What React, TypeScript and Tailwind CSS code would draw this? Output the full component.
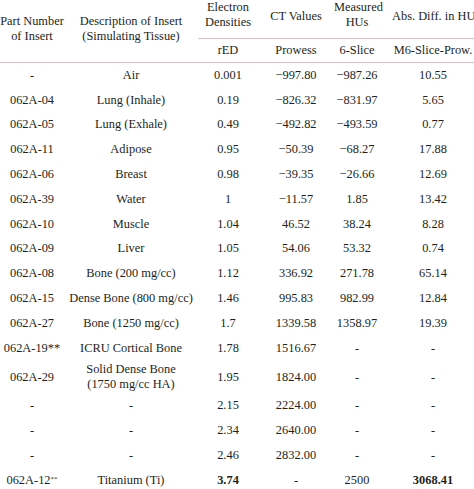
const rows: [React.ReactNode, React.ReactNode, string, string, string, string, boolean?][] = [
  ["-", "Air", "0.001", "\u2212997.80", "\u2212987.26", "10.55"],
  ["062A-04", "Lung (Inhale)", "0.19", "\u2212826.32", "\u2212831.97", "5.65"],
  ["062A-05", "Lung (Exhale)", "0.49", "\u2212492.82", "\u2212493.59", "0.77"],
  ["062A-11", "Adipose", "0.95", "\u221250.39", "\u221268.27", "17.88"],
  ["062A-06", "Breast", "0.98", "\u221239.35", "\u221226.66", "12.69"],
  ["062A-39", "Water", "1", "\u221211.57", "1.85", "13.42"],
  ["062A-10", "Muscle", "1.04", "46.52", "38.24", "8.28"],
  ["062A-09", "Liver", "1.05", "54.06", "53.32", "0.74"],
  ["062A-08", "Bone (200 mg/cc)", "1.12", "336.92", "271.78", "65.14"],
  ["062A-15", "Dense Bone (800 mg/cc)", "1.46", "995.83", "982.99", "12.84"],
  ["062A-27", "Bone (1250 mg/cc)", "1.7", "1339.58", "1358.97", "19.39"],
  ["062A-19**", "ICRU Cortical Bone", "1.78", "1516.67", "-", "-"],
  ["062A-29", <>Solid Dense Bone<br />(1750 mg/cc HA)</>, "1.95", "1824.00", "-", "-"],
  ["-", "-", "2.15", "2224.00", "-", "-"],
  ["-", "-", "2.34", "2640.00", "-", "-"],
  ["-", "-", "2.46", "2832.00", "-", "-"],
  [
    <>062A-12<sup className="text-[7px] align-top relative top-[-1px]">**</sup></>,
    "Titanium (Ti)",
    "3.74",
    "-",
    "2500",
    "3068.41",
    true,
  ],
];

const rule = "border-[#d2c2c2]";

export default function App() {
  return (
    <div className="w-[474px] h-[489px] overflow-hidden bg-white text-[#231f20] text-[12.4px] leading-[15px] font-['Liberation_Serif',serif]">
      <div className="grid grid-cols-[64px_134px_60px_76px_46px_94px] text-center whitespace-nowrap">
        <div className={`row-span-2 border-b ${rule} pt-[14px]`}>Part Number<br />of Insert</div>
        <div className={`row-span-2 border-b ${rule} pt-[14px]`}>Description of Insert<br />(Simulating Tissue)</div>
        <div className={`h-[39px] border-b ${rule} pt-0`}>Electron<br />Densities</div>
        <div className={`h-[39px] border-b ${rule} pt-[9px]`}>CT Values</div>
        <div className={`h-[39px] border-b ${rule} pt-0`}>Measured<br />HUs</div>
        <div className={`h-[39px] border-b ${rule} pt-[9px] pl-3`}>Abs. Diff. in HU</div>
        <div className={`h-[24px] border-b ${rule} flex items-center justify-center`}>rED</div>
        <div className={`h-[24px] border-b ${rule} flex items-center justify-center`}>Prowess</div>
        <div className={`h-[24px] border-b ${rule} flex items-center justify-center`}>6-Slice</div>
        <div className={`h-[24px] border-b ${rule} flex items-center justify-center pl-3`}>M6-Slice-Prow.</div>

        {rows.map((r, i) => {
          const h = i === 12 ? "h-[33px]" : "h-[24.8px]";
          const cell = `${h} flex items-center justify-center`;
          const bold = r[6] ? "font-bold" : "";
          return [
            <div key={`${i}a`} className={cell}>{r[0]}</div>,
            <div key={`${i}b`} className={cell}>{r[1]}</div>,
            <div key={`${i}c`} className={`${cell} ${bold}`}>{r[2]}</div>,
            <div key={`${i}d`} className={cell}>{r[3]}</div>,
            <div key={`${i}e`} className={cell}>{r[4]}</div>,
            <div key={`${i}f`} className={`${cell} pl-3 ${bold}`}>{r[5]}</div>,
          ];
        })}
      </div>
    </div>
  );
}
